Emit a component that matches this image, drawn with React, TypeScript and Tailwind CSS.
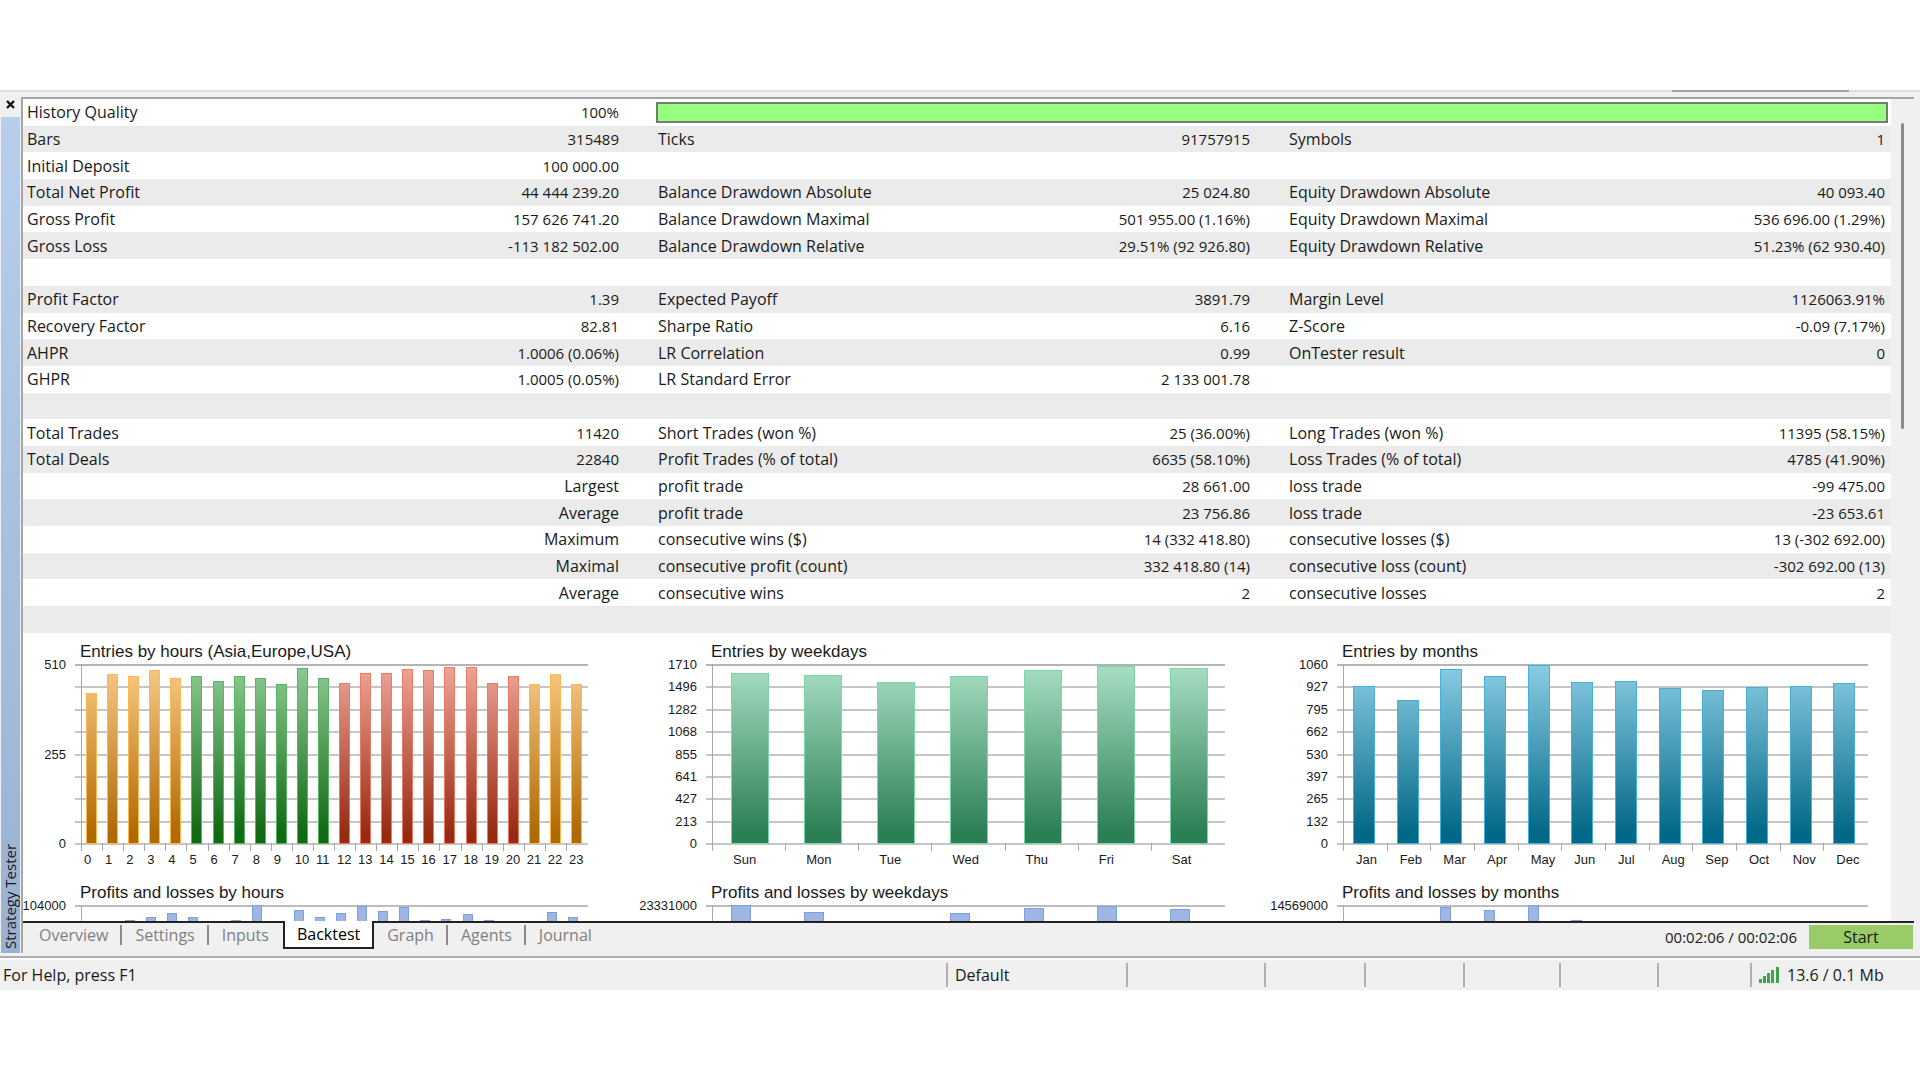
import { useState } from 'react';
import clsx from 'clsx';

const rows: string[][] = [
    ['Bars', '315489', 'Ticks', '91757915', 'Symbols', '1'],
    ['Initial Deposit', '100 000.00', '', '', '', ''],
    ['Total Net Profit', '44 444 239.20', 'Balance Drawdown Absolute', '25 024.80', 'Equity Drawdown Absolute', '40 093.40'],
    ['Gross Profit', '157 626 741.20', 'Balance Drawdown Maximal', '501 955.00 (1.16%)', 'Equity Drawdown Maximal', '536 696.00 (1.29%)'],
    ['Gross Loss', '-113 182 502.00', 'Balance Drawdown Relative', '29.51% (92 926.80)', 'Equity Drawdown Relative', '51.23% (62 930.40)'],
    ['', '', '', '', '', ''],
    ['Profit Factor', '1.39', 'Expected Payoff', '3891.79', 'Margin Level', '1126063.91%'],
    ['Recovery Factor', '82.81', 'Sharpe Ratio', '6.16', 'Z-Score', '-0.09 (7.17%)'],
    ['AHPR', '1.0006 (0.06%)', 'LR Correlation', '0.99', 'OnTester result', '0'],
    ['GHPR', '1.0005 (0.05%)', 'LR Standard Error', '2 133 001.78', '', ''],
    ['', '', '', '', '', ''],
    ['Total Trades', '11420', 'Short Trades (won %)', '25 (36.00%)', 'Long Trades (won %)', '11395 (58.15%)'],
    ['Total Deals', '22840', 'Profit Trades (% of total)', '6635 (58.10%)', 'Loss Trades (% of total)', '4785 (41.90%)'],
    ['', 'Largest', 'profit trade', '28 661.00', 'loss trade', '-99 475.00'],
    ['', 'Average', 'profit trade', '23 756.86', 'loss trade', '-23 653.61'],
    ['', 'Maximum', 'consecutive wins ($)', '14 (332 418.80)', 'consecutive losses ($)', '13 (-302 692.00)'],
    ['', 'Maximal', 'consecutive profit (count)', '332 418.80 (14)', 'consecutive loss (count)', '-302 692.00 (13)'],
    ['', 'Average', 'consecutive wins', '2', 'consecutive losses', '2'],
    ['', '', '', '', '', ''],
];

interface Palette {
    id: string;
    top: string;
    bottom: string;
    border: string;
}

const asia: Palette = { id: 'asia', top: '#f9cb88', bottom: '#b06a02', border: '#ffb850' };
const europe: Palette = { id: 'europe', top: '#90cc94', bottom: '#116a14', border: '#58b565' };
const usa: Palette = { id: 'usa', top: '#f0a698', bottom: '#982a12', border: '#ea7b66' };
const weekday: Palette = { id: 'weekday', top: '#a9dfc4', bottom: '#2b7f54', border: '#7ed6a4' };
const month: Palette = { id: 'month', top: '#8bcde4', bottom: '#026887', border: '#45b1d6' };

interface ChartData {
    name: string;
    title: string;
    profitTitle: string;
    profitMax: string;
    width: number;
    plotWidth: number;
    max: number;
    ticks: (number | null)[];
    labels: string[];
    values: number[];
    colorOf: (i: number) => Palette;
    palettes: Palette[];
    barOffset: number;
    barWidth: number;
    labelOffset: number;
    profitOffset: number;
    profitWidth: number;
    // distance of each profit bar from the top grid line, null where the bar is out of view
    profits: (number | null)[];
}

const charts: ChartData[] = [
    {
        name: 'hours',
        title: 'Entries by hours (Asia,Europe,USA)',
        profitTitle: 'Profits and losses by hours',
        profitMax: '104000',
        width: 631,
        plotWidth: 506,
        max: 510,
        ticks: [510, null, null, null, 255, null, null, null, 0],
        labels: Array.from({ length: 24 }, (_, i) => String(i)),
        values: [431, 483, 478, 496, 472, 480, 464, 478, 474, 456, 501, 474, 460, 487, 487, 500, 495, 504, 503, 458, 479, 457, 483, 457],
        colorOf: (i) => (i < 5 || i > 20 ? asia : i < 12 ? europe : usa),
        palettes: [asia, europe, usa],
        barOffset: 4,
        barWidth: 11,
        labelOffset: 2,
        profitOffset: 1,
        profitWidth: 10,
        profits: [null, null, 15, 12, 8, 12, null, 15, 0, null, 5, 12, 8, 1, 6, 2, 15, 14, 9, 15, null, null, 7, 12],
    },
    {
        name: 'weekdays',
        title: 'Entries by weekdays',
        profitTitle: 'Profits and losses by weekdays',
        profitMax: '23331000',
        width: 631,
        plotWidth: 512,
        max: 1710,
        ticks: [1710, 1496, 1282, 1068, 855, 641, 427, 213, 0],
        labels: ['Sun', 'Mon', 'Tue', 'Wed', 'Thu', 'Fri', 'Sat'],
        values: [1633, 1617, 1550, 1605, 1659, 1704, 1678],
        colorOf: () => weekday,
        palettes: [weekday],
        barOffset: 18,
        barWidth: 38,
        labelOffset: 20,
        profitOffset: 18,
        profitWidth: 20,
        profits: [0, 7, null, 8, 3, 1, 4],
    },
    {
        name: 'months',
        title: 'Entries by months',
        profitTitle: 'Profits and losses by months',
        profitMax: '14569000',
        width: 606,
        plotWidth: 524,
        max: 1060,
        ticks: [1060, 927, 795, 662, 530, 397, 265, 132, 0],
        labels: ['Jan', 'Feb', 'Mar', 'Apr', 'May', 'Jun', 'Jul', 'Aug', 'Sep', 'Oct', 'Nov', 'Dec'],
        values: [937, 852, 1038, 997, 1060, 959, 967, 925, 911, 929, 933, 955],
        colorOf: () => month,
        palettes: [month],
        barOffset: 9,
        barWidth: 22,
        labelOffset: 12,
        profitOffset: 9,
        profitWidth: 11,
        profits: [null, null, 2, 5, 0, 15, null, null, null, null, null, null],
    },
];

const AXIS_X = 59;
const TOP = 31;
const BASE = 210;
const PROFIT_TOP = 272;

function Chart({ data }: { data: ChartData }) {
    const slot = data.plotWidth / data.labels.length;
    const right = AXIS_X + data.plotWidth;

    return (
        <svg viewBox={`0 0 ${data.width} 288`} className="block w-full overflow-visible" role="img" aria-label={data.title}>
            <defs>
                {data.palettes.map((p) => (
                    <linearGradient key={p.id} id={p.id} gradientUnits="userSpaceOnUse" x1="0" x2="0" y1={TOP} y2={BASE - 10}>
                        <stop offset="0" stopColor={p.top} />
                        <stop offset="1" stopColor={p.bottom} />
                    </linearGradient>
                ))}
            </defs>

            <text x={AXIS_X - 2} y="24" fontSize="17" fill="#1a1a1a">{data.title}</text>
            {data.ticks.map((tick, i) => {
                const y = Math.round(TOP + ((BASE - TOP) / 8) * i);
                return (
                    <g key={i}>
                        <rect x={AXIS_X - 7} y={y} width={data.plotWidth + 7} height="2" fill={i === 0 ? '#b4b4b4' : '#c6c6c6'} />
                        {tick !== null && (
                            <text x="43" y={y + 5} fontSize="13" textAnchor="end" fill="#1a1a1a">{tick}</text>
                        )}
                    </g>
                );
            })}
            <rect x={AXIS_X - 1} y={TOP} width="1" height={BASE - TOP} fill="#a8a8a8" />

            {data.labels.map((label, i) => {
                const x = AXIS_X + slot * i;
                const left = Math.round(x + data.barOffset);
                const h = Math.round(((BASE - TOP) * data.values[i]) / data.max);
                const color = data.colorOf(i);
                return (
                    <g key={label}>
                        <rect x={Math.round(x) - 1} y={BASE} width="1" height="8" fill="#a8a8a8" />
                        <rect x={left + 0.5} y={BASE - h + 1.5} width={data.barWidth - 1} height={h - 1} fill={`url(#${color.id})`} stroke={color.border} />
                        <text x={x + data.labelOffset} y="231" fontSize="13" fill="#1a1a1a">{label}</text>
                    </g>
                );
            })}

            <text x={AXIS_X - 2} y="265" fontSize="17" fill="#1a1a1a">{data.profitTitle}</text>
            <text x="43" y={PROFIT_TOP + 5} fontSize="13" textAnchor="end" fill="#1a1a1a">{data.profitMax}</text>
            <rect x={AXIS_X - 7} y={PROFIT_TOP} width={right - AXIS_X + 7} height="2" fill="#bcbcbc" />
            <rect x={AXIS_X - 1} y={PROFIT_TOP} width="1" height="20" fill="#a8a8a8" />
            {data.profits.map((drop, i) =>
                drop === null ? null : (
                    <rect
                        key={i}
                        x={Math.round(AXIS_X + slot * i + data.profitOffset) + 0.5}
                        y={PROFIT_TOP + drop + 0.5}
                        width={data.profitWidth - 1}
                        height="30"
                        fill="#9fb6e3"
                        stroke="#7c9fdf"
                    />
                )
            )}
        </svg>
    );
}

function ReportTable() {
    return (
        <table className="h-[534px] w-full table-fixed border-collapse">
            <colgroup>
                <col className="w-[14%]" />
                <col />
                <col className="w-[14%]" />
                <col />
                <col className="w-[14%]" />
                <col className="w-[18.44%]" />
            </colgroup>
            <tbody>
                <tr className="h-[26px]">
                    <th scope="row" className="p-0 pl-1 text-left font-normal">History Quality</th>
                    <td className="p-0 pr-[35px] text-right text-[15px]">100%</td>
                    <td colSpan={4} className="p-0 pr-[3px] pl-[2px]">
                        <div className="h-[21px] border-2 border-[#6f7f6c] bg-[#96ff82]" />
                    </td>
                </tr>
                {rows.map((row, i) => (
                    <tr key={i} className={clsx('h-[26px]', i % 2 === 0 ? 'bg-[#ebebeb]' : 'bg-white')}>
                        {row.map((cell, j) =>
                            j % 2 === 0 ? (
                                <th key={j} scope="row" className="p-0 pl-1 text-left font-normal whitespace-nowrap">{cell}</th>
                            ) : (
                                <td
                                    key={j}
                                    className={clsx(
                                        'p-0 text-right whitespace-nowrap',
                                        j === 5 ? 'pr-[6px]' : 'pr-[35px]',
                                        /\d/.test(cell) && 'text-[15px]'
                                    )}
                                >
                                    {cell}
                                </td>
                            )
                        )}
                    </tr>
                ))}
            </tbody>
        </table>
    );
}

const tabs = ['Overview', 'Settings', 'Inputs', 'Backtest', 'Graph', 'Agents', 'Journal'];

function TabBar() {
    const [active, setActive] = useState('Backtest');
    const activeIndex = tabs.indexOf(active);

    return (
        <div className="flex h-8 items-start">
            <div role="tablist" className="flex h-8 flex-1 items-start border-t-2 border-[#222] pl-[3px]">
                {tabs.map((tab, i) => (
                    <button
                        key={tab}
                        role="tab"
                        aria-selected={tab === active}
                        onClick={() => setActive(tab)}
                        className={clsx(
                            'flex items-center',
                            tab === active ? '-mt-[2px] h-7 border-2 border-t-0 border-[#222] bg-white px-3 text-black' : 'h-6 pl-[13px] text-[#808080]'
                        )}
                    >
                        {tab}
                        {tab !== active && (
                            <span className={clsx('ml-3 h-5 w-[2px]', i !== activeIndex - 1 && i !== tabs.length - 1 && 'bg-[#8c8c8c]')} />
                        )}
                    </button>
                ))}
            </div>
            <div className="flex h-8 items-start gap-3 border-t-2 border-[#222] pt-[2px] pr-px">
                <span className="text-[15px] leading-6">00:02:06 / 00:02:06</span>
                <button className="h-6 w-[104px] bg-[#99cc66] text-center">Start</button>
            </div>
        </div>
    );
}

function StatusBar() {
    return (
        <footer className="flex h-[32px] items-center border-t-2 border-[#fbfbfb] bg-[#f0f0f0]">
            <span className="flex-1 pl-[3px]">For Help, press F1</span>
            <span className="h-6 w-[180px] border-l-2 border-[#b0b0b0] pl-[7px] leading-6">Default</span>
            <span className="h-6 w-[138px] border-l-2 border-[#b0b0b0]" />
            <span className="h-6 w-[100px] border-l-2 border-[#b0b0b0]" />
            <span className="h-6 w-[99px] border-l-2 border-[#b0b0b0]" />
            <span className="h-6 w-[96px] border-l-2 border-[#b0b0b0]" />
            <span className="h-6 w-[98px] border-l-2 border-[#b0b0b0]" />
            <span className="h-6 w-[93px] border-l-2 border-[#b0b0b0]" />
            <span className="flex h-6 w-[170px] items-center gap-2 border-l-2 border-[#b0b0b0] pl-[7px]">
                <svg width="20" height="16" viewBox="0 0 20 16" fill="#3ea34a" aria-hidden="true">
                    <rect x="0" y="12" width="3" height="4" />
                    <rect x="4" y="9" width="3" height="7" />
                    <rect x="8" y="6" width="3" height="10" />
                    <rect x="12" y="3" width="3" height="13" />
                    <rect x="17" y="0" width="3" height="16" />
                </svg>
                13.6 / 0.1 Mb
            </span>
        </footer>
    );
}

export default function App() {
    return (
        <div className="bg-white pt-[90px] font-['Open_Sans','Noto_Sans',sans-serif] text-base leading-5 text-[#1a1a1a]">
            <div className="flex h-[2px] justify-end bg-[#dedede] pr-[71px]">
                <div className="w-[177px] bg-[#a2a2a2]" />
            </div>
            <div className="flex border-b-2 border-[#adadad] bg-[#f0f0f0] pt-[5px] pb-[3px] pr-[6px]">
                <aside className="flex w-[21px] shrink-0 flex-col pr-px pl-px">
                    <button aria-label="Close" className="flex h-5 items-start justify-center pt-[3px]">
                        <svg width="9" height="9" viewBox="0 0 9 9" stroke="#111" strokeWidth="2.4" aria-hidden="true">
                            <path d="M1 1l7 7M8 1l-7 7" />
                        </svg>
                    </button>
                    <div className="flex flex-1 rotate-180 items-center bg-linear-to-t from-[#b7cfeb] to-[#99b2d2] pt-1 text-[15px] [writing-mode:vertical-rl]">
                        <span className="leading-[19px]">Strategy Tester</span>
                    </div>
                </aside>
                <main className="min-w-0 flex-1 border-l-2 border-[#a6a6a6]">
                    <div className="flex h-[824px] border-t-2 border-[#a6a6a6]">
                        <div className="min-w-0 flex-1 overflow-hidden bg-white">
                            <ReportTable />
                            <div className="grid grid-cols-[631fr_631fr_606fr] font-['Liberation_Sans',Arial,sans-serif]">
                                {charts.map((chart) => (
                                    <Chart key={chart.name} data={chart} />
                                ))}
                            </div>
                        </div>
                        <div className="w-[23px] shrink-0 bg-[#f0f0f0] pt-6 pl-[10px]">
                            <div className="h-[306px] w-[3px] rounded-sm bg-[#8a8a8a]" />
                        </div>
                    </div>
                    <TabBar />
                </main>
            </div>
            <StatusBar />
        </div>
    );
}
